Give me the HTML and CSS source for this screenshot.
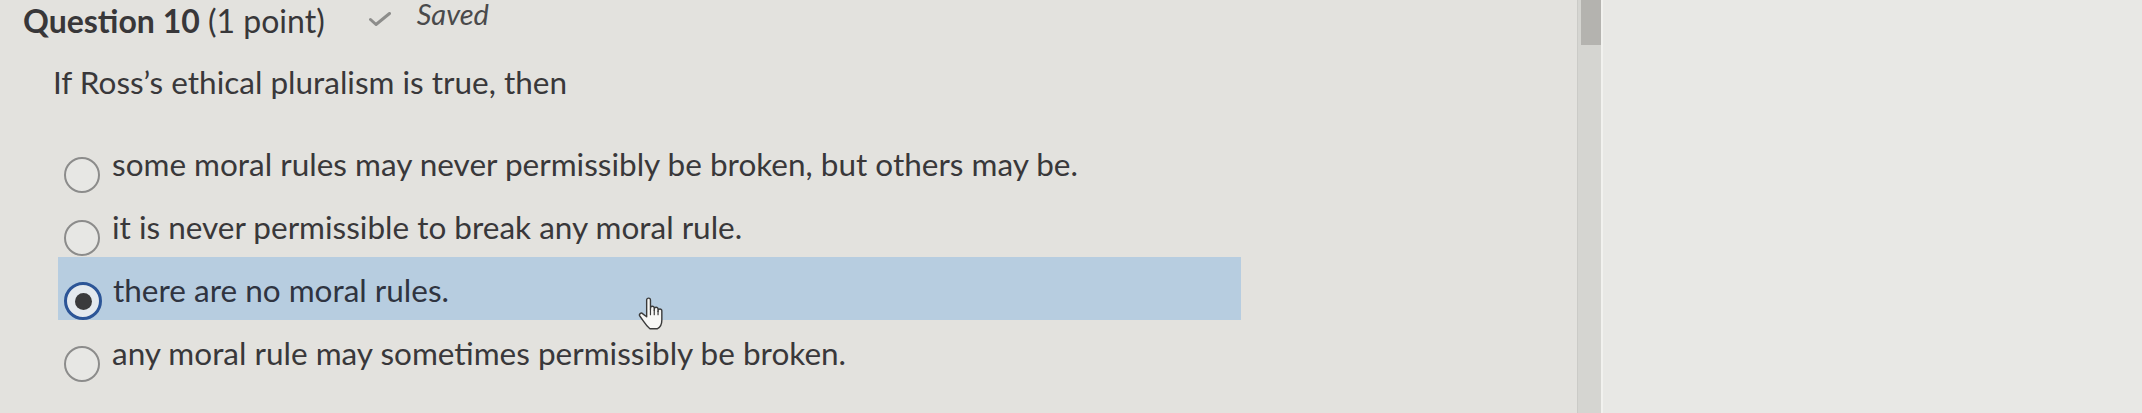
FILE: index.html
```html
<!DOCTYPE html>
<html lang="en">
<head>
<meta charset="utf-8">
<title>Question 10</title>
<link rel="stylesheet" href="styles.css">
</head>
<body>
<div class="page">
  <main class="main">
    <div class="head">
      <h2 class="title"><strong>Question 10</strong> (1 point)</h2>
      <svg class="check" viewBox="0 0 22 14" width="22" height="14" aria-hidden="true">
        <polyline points="1.5,7.5 7,12.5 20.5,1.5" fill="none" stroke="#8d8d8b" stroke-width="3" stroke-linejoin="round" stroke-linecap="round"/>
      </svg>
      <span class="saved">Saved</span>
    </div>
    <p class="prompt">If Ross’s ethical pluralism is true, then</p>
    <div class="answers">
      <label class="answer">
        <span class="radio"></span>
        <span class="text">some moral rules may never permissibly be broken, but others may be.</span>
      </label>
      <label class="answer">
        <span class="radio"></span>
        <span class="text">it is never permissible to break any moral rule.</span>
      </label>
      <label class="answer selected">
        <span class="radio"><span class="dot"></span></span>
        <span class="text">there are no moral rules.</span>
        <svg class="cursor" viewBox="0 0 24 31" width="26" height="34" aria-hidden="true">
          <path d="M8 18 V3.5 a1.75 1.75 0 0 1 3.5 0 V12 V11 a1.75 1.75 0 0 1 3.5 0 V13 V12 a1.75 1.75 0 0 1 3.5 0 V14 V13.5 a1.75 1.75 0 0 1 3.5 0 V22 c0 4 -2 7 -4 8 H11 c-2 -1.5 -4 -4 -6 -7 L1.8 18.5 a1.7 1.7 0 0 1 2.6 -2.2 L8 19 Z" fill="#f7f7f5" stroke="#3a3a3a" stroke-width="1.3" stroke-linejoin="round"/>
          <path d="M11.5 12 v5 M15 13 v4 M18.5 14 v3" fill="none" stroke="#3a3a3a" stroke-width="1.1" stroke-linecap="round"/>
        </svg>
      </label>
      <label class="answer">
        <span class="radio"></span>
        <span class="text">any moral rule may sometimes permissibly be broken.</span>
      </label>
    </div>
  </main>
  <div class="scrollbar"><div class="thumb"></div></div>
  <aside class="side"></aside>
</div>
</body>
</html>
```

FILE: styles.css
```css
html, body {
  margin: 0;
  padding: 0;
}

body {
  width: 2142px;
  height: 413px;
  overflow: hidden;
  background: #e3e2de;
  font-family: Lato, "Open Sans", "Liberation Sans", sans-serif;
  color: #3a3a3b;
}

.page {
  display: flex;
  height: 413px;
}

.main {
  width: 1577px;
  flex: none;
  background: #e3e2de;
}

.head {
  display: flex;
  align-items: flex-start;
  padding-left: 23px;
}

.title {
  margin: 0 44px 0 0;
  padding-top: 2px;
  font-size: 32px;
  line-height: 38px;
  font-weight: 400;
  color: #383739;
}

.title strong {
  font-weight: 700;
}

.check {
  margin-top: 12px;
  margin-right: 26px;
  flex: none;
}

.saved {
  margin-top: -3px;
  font-size: 29px;
  line-height: 34px;
  font-style: italic;
  color: #4a4a4b;
}

.prompt {
  margin: 23px 0 0 53px;
  font-size: 31.5px;
  line-height: 38px;
  color: #39383a;
}

.answers {
  margin: 30px 0 0 58px;
  width: 1183px;
  display: flex;
  flex-direction: column;
}

.answer {
  position: relative;
  display: flex;
  align-items: flex-start;
  height: 63px;
  box-sizing: border-box;
  padding: 14px 0 0 6px;
}

.answer.selected {
  background: #b7cde0;
}

.radio {
  flex: none;
  box-sizing: border-box;
  width: 36px;
  height: 36px;
  margin-top: 12px;
  margin-right: 12px;
  border: 2px solid #8c8c8b;
  border-radius: 50%;
  background: #e7e7e4;
  display: flex;
  align-items: center;
  justify-content: center;
}

.selected .radio {
  width: 38px;
  height: 38px;
  margin-top: 11px;
  margin-right: 11px;
  border: 3px solid #2c5597;
  background: #e4e9ee;
}

.dot {
  width: 17px;
  height: 17px;
  border-radius: 50%;
  background: #3a3a3c;
}

.text {
  font-size: 31.5px;
  line-height: 38px;
  color: #39383a;
  white-space: nowrap;
}

.selected .text {
  color: #2f3440;
}

.cursor {
  position: absolute;
  left: 580px;
  top: 39px;
}

.scrollbar {
  flex: none;
  width: 26px;
  box-sizing: border-box;
  background: #d5d5d1;
  border-left: 1px solid #cbcbc7;
  border-right: 2px solid #f1f1ee;
  padding-left: 3px;
}

.thumb {
  height: 45px;
  background: #b4b3af;
}

.side {
  flex: 1;
  background: #e8e8e5;
}
```
